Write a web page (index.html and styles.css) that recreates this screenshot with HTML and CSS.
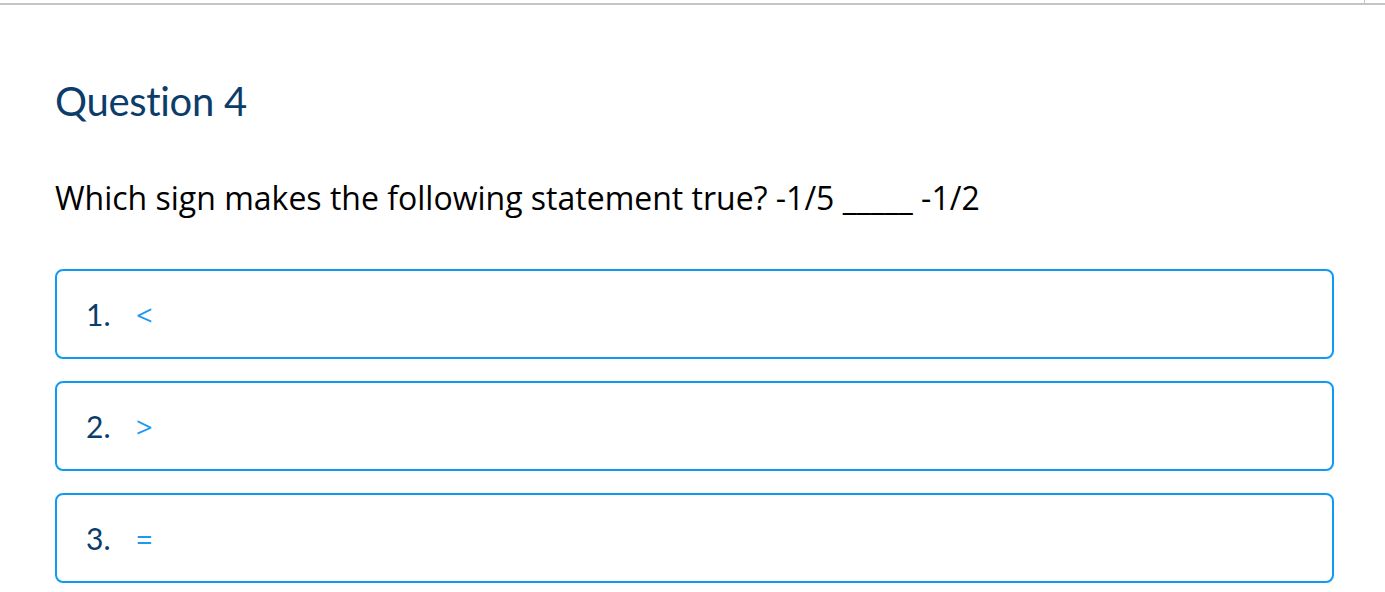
FILE: index.html
```html
<!DOCTYPE html>
<html>
<head>
<meta charset="utf-8">
<link rel="stylesheet" href="styles.css">
</head>
<body>
<div class="topbar"><div class="tick"></div></div>
<main class="quiz">
  <h1 class="title">Question 4</h1>
  <p class="prompt">Which sign makes the following statement true? -1/5 _____ -1/2</p>
  <ol class="options">
    <li class="option"><span class="num">1.</span><span class="sym">&lt;</span></li>
    <li class="option"><span class="num">2.</span><span class="sym">&gt;</span></li>
    <li class="option"><span class="num">3.</span><span class="sym">=</span></li>
  </ol>
</main>
</body>
</html>
```
FILE: styles.css
```css
html, body {
  margin: 0;
  padding: 0;
  background: #ffffff;
}
.topbar {
  height: 3px;
  border-bottom: 2px solid #c3c6c9;
  position: relative;
}
.tick {
  position: absolute;
  left: 1364px;
  top: 0;
  width: 1px;
  height: 3px;
  background: #c3c6c9;
}
.quiz {
  padding: 0 52px 0 55px;
}
.title {
  margin: 71px 0 0 0;
  font-family: Lato, "Open Sans", sans-serif;
  font-weight: 400;
  font-size: 40px;
  line-height: 50px;
  color: #0b3d6a;
  letter-spacing: -0.3px;
}
.prompt {
  margin: 52px 0 0 0;
  font-family: "Open Sans", sans-serif;
  font-size: 32px;
  line-height: 40px;
  color: #000000;
}
.options {
  list-style: none;
  margin: 51px 0 0 0;
  padding: 0;
  display: flex;
  flex-direction: column;
  gap: 22px;
}
.option {
  box-sizing: border-box;
  width: 1279px;
  height: 90px;
  border: 2px solid #0f9bf2;
  border-radius: 8px;
  display: flex;
  align-items: center;
  padding-left: 29px;
}
.num {
  font-family: Lato, sans-serif;
  font-size: 30px;
  color: #0b3d6a;
  width: 50px;
}
.sym {
  font-family: "Open Sans", sans-serif;
  font-size: 29px;
  color: #1a9af5;
}
```
